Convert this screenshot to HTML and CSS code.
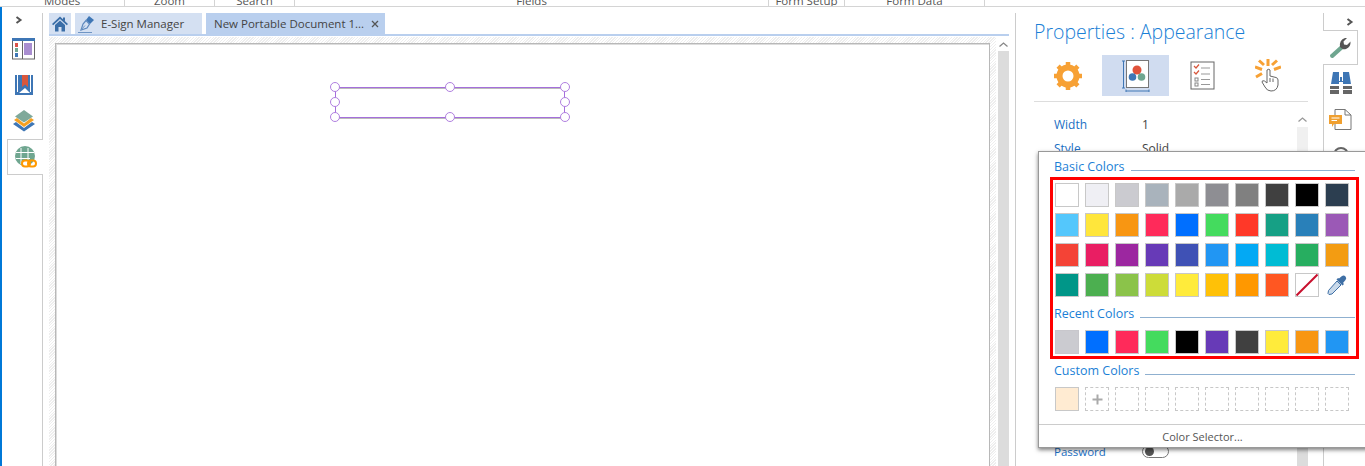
FILE: index.html
```html
<!DOCTYPE html>
<html>

<head>
  <meta charset="utf-8">
  <title>Form editor</title>
  <link rel="stylesheet" href="styles.css">
</head>

<body>

<div class="ribbon">
  <div class="group w125">Modes</div>
  <div class="group w90">Zoom</div>
  <div class="group w80">Search</div>
  <div class="group w474">Fields</div>
  <div class="group w76">Form Setup</div>
  <div class="group w140">Form Data</div>
</div>

<div class="main">

  <div class="rail">
    <div class="chevron"><svg width="8" height="8" viewBox="0 0 8 8"><path d="M1.500 1 L5.500 4 L1.500 7" fill="none" stroke="#555" stroke-width="2"/></svg></div>
    <div class="railitem">
      <svg width="24" height="22" viewBox="0 0 24 22">
        <rect x="0.500" y="1" width="22" height="20" fill="#fff" stroke="#666"/>
        <rect x="0" y="0" width="23" height="3" fill="#3e76b5"/>
        <rect x="10" y="3" width="1" height="18" fill="#666"/>
        <rect x="3" y="5" width="3" height="4" fill="#d9534a"/>
        <rect x="3" y="10" width="3" height="4" fill="#6fa690"/>
        <rect x="3" y="15" width="3" height="4" fill="#3e76b5"/>
        <rect x="12" y="5" width="8" height="12" fill="#a98ed0"/>
      </svg>
    </div>
    <div class="railitem">
      <svg width="20" height="22" viewBox="0 0 20 22">
        <rect x="1" y="1" width="18" height="20" fill="#3e76b5"/>
        <rect x="3" y="1" width="1" height="17" fill="#fff"/>
        <rect x="16" y="1" width="1" height="17" fill="#fff"/>
        <path d="M8 1 H14 V13 L11 10.500 L8 13 Z" fill="#d9573c"/>
        <path d="M5 19 L11 14 L16 19 Z" fill="#fff"/>
      </svg>
    </div>
    <div class="railitem">
      <svg width="22" height="22" viewBox="0 0 22 22">
        <path d="M0 14 L3 12 L11 18 L19 12 L22 14 L11 21.500 Z" fill="#3e76b5"/>
        <path d="M1 10 L4 8 L11 13.500 L18 8 L21 10 L11 17 Z" fill="#f5a021"/>
        <path d="M11 0 L20 6.500 L11 12.500 L2 6.500 Z" fill="#7fa99a"/>
      </svg>
    </div>
    <div class="railitem active">
      <svg width="22" height="22" viewBox="0 0 22 22">
        <circle cx="10" cy="10" r="10" fill="#6fa690"/>
        <path d="M6 2 V18 M13 2 V14 M1 6.500 H19 M1 12.500 H15" stroke="#fff" stroke-width="1" fill="none"/>
        <rect x="7" y="14.500" width="8" height="6" rx="3" fill="#fff" stroke="#f90" stroke-width="2"/>
        <rect x="13" y="14.500" width="8" height="6" rx="3" fill="none" stroke="#f90" stroke-width="2"/>
      </svg>
    </div>
  </div>

  <div class="workspace">
    <div class="tabs">
      <div class="tab home">
        <svg width="16" height="16" viewBox="0 0 16 16"><path d="M8 0.500 L16 8 L14.800 9.200 L8 3 L1.200 9.200 L0 8 Z M11 1.500 H13 V5 L11 3.500 Z M3 9 L8 4.500 L13 9 V15.500 H9.500 V11 H6.500 V15.500 H3 Z" fill="#3a6ea8"/></svg>
      </div>
      <div class="tab esign">
        <svg width="17" height="18" viewBox="0 0 17 18">
          <path d="M11 1 L16 5 L12 9 L8 5 Z" fill="#3e76b5"/>
          <path d="M8 5.500 L11.500 9 L9 13 L3 15 L5 9 Z" fill="none" stroke="#5d88bd" stroke-width="1.200"/>
          <path d="M3 15 L7 10.500 M0 17.500 H14" stroke="#6f95c4" stroke-width="1" fill="none"/>
        </svg>
        <span>E-Sign Manager</span>
      </div>
      <div class="tab doc">
        <span>New Portable Document 1...</span>
        <svg class="close" width="8" height="8" viewBox="0 0 8 8"><path d="M1 1 L7 7 M7 1 L1 7" stroke="#555" stroke-width="1.300"/></svg>
      </div>
    </div>
    <div class="canvas">
      <div class="hatch">
        <div class="page">
          <div class="field">
            <span class="handle h1"></span>
            <span class="handle h2"></span>
            <span class="handle h3"></span>
            <span class="handle h4"></span>
            <span class="handle h5"></span>
            <span class="handle h6"></span>
            <span class="handle h7"></span>
            <span class="handle h8"></span>
          </div>
        </div>
      </div>
      <div class="vscroll">
        <div class="arrow"><svg width="9" height="5" viewBox="0 0 9 5"><path d="M0.500 4.500 L4.500 1 L8.500 4.500" fill="none" stroke="#888" stroke-width="1.300"/></svg></div>
        <div class="track"></div>
      </div>
    </div>
  </div>

  <div class="panel">
    <div class="paneltitle">Properties : Appearance</div>
    <div class="paneltabs">
      <div class="ptab first">
        <svg width="28" height="28" viewBox="0 0 28 28">
          <circle cx="14" cy="14" r="8.500" fill="none" stroke="#f7a135" stroke-width="6"/>
          <path d="M14 0 V5 M14 23 V28 M0 14 H5 M23 14 H28 M4.100 4.100 L7.600 7.600 M20.400 20.400 L23.900 23.900 M23.900 4.100 L20.400 7.600 M7.600 20.400 L4.100 23.900" stroke="#f7a135" stroke-width="4.500"/>
        </svg>
      </div>
      <div class="ptab selected">
        <svg width="28" height="32" viewBox="0 0 28 32">
          <path d="M0 1 H3 M1.500 1 V28 M0 28 H3 M4 31 H27 M4 29.500 V32 M27 29.500 V32" stroke="#3e76b5" fill="none"/>
          <rect x="4.500" y="0.500" width="22" height="27" fill="#fff" stroke="#777"/>
          <circle cx="15" cy="10" r="4.500" fill="#e0523a"/>
          <circle cx="10.500" cy="17" r="3.800" fill="#3e76b5"/>
          <circle cx="19.500" cy="17" r="3.800" fill="#6fa690"/>
        </svg>
      </div>
      <div class="ptab">
        <svg width="25" height="29" viewBox="0 0 25 29">
          <rect x="1" y="1" width="23" height="27" fill="#fff" stroke="#666" stroke-width="1"/>
          <path d="M4 5 L6 7 L9 3.500 M4 11 L6 13 L9 9.500" fill="none" stroke="#d9573c" stroke-width="1.200"/>
          <path d="M11 7 H20 M11 13 H20 M11 18.500 H20 M11 23.500 H20" stroke="#999"/>
          <rect x="5" y="17" width="3" height="3" fill="none" stroke="#888"/>
          <rect x="5" y="22" width="3" height="3" fill="none" stroke="#888"/>
        </svg>
      </div>
      <div class="ptab">
        <svg width="26" height="33" viewBox="0 0 26 33">
          <path d="M13 0 V7 M0 8 L7 10.500 M26 8 L19 10.500 M4 1.500 L9 6 M22 1.500 L17 6 M1 18 L7 14.500" stroke="#f7a135" stroke-width="3" fill="none"/>
          <path d="M12 11 Q14 9.500 15 11 V17 L21 18.500 Q23 19 23 21 V26 Q22 32 16 32 Q12 32 10 28 L7 23 Q7 21 9.500 22 L12 24 Z" fill="#fff" stroke="#666"/>
          <path d="M15 19 V23 M18 19.500 V23" stroke="#666"/>
        </svg>
      </div>
    </div>
    <div class="props">
      <div class="proplist">
        <div class="prop"><span class="propname">Width</span><span>1</span></div>
        <div class="prop"><span class="propname">Style</span><span>Solid</span></div>
        <div class="prop password"><span class="propname">Password</span><span class="toggle"></span></div>
      </div>
      <div class="propscroll">
        <div class="arrow"><svg width="9" height="5" viewBox="0 0 9 5"><path d="M0.500 4.500 L4.500 1 L8.500 4.500" fill="none" stroke="#999" stroke-width="1.300"/></svg></div>
        <div class="proptrack"><div class="propthumb"></div></div>
      </div>
    </div>
  </div>

  <div class="rrail">
    <div class="chevron"><svg width="8" height="8" viewBox="0 0 8 8"><path d="M1.500 1 L5.500 4 L1.500 7" fill="none" stroke="#555" stroke-width="2"/></svg></div>
    <div class="rritem active">
      <svg width="22" height="22" viewBox="0 0 22 22">
        <path d="M1 18 L11 9 L14 12 L4 21 Q1 21.500 1 18 Z" fill="#6fa690"/>
        <path d="M11 10 Q10 3 16 1 L18 1 L14.500 4.500 L15 7.500 L18 8 L21.500 4.500 Q22 10 17 12 Q15 12.500 13.500 12 Z" fill="#555"/>
      </svg>
    </div>
    <div class="rritem">
      <svg width="22" height="22" viewBox="0 0 22 22">
        <path d="M3 0 H9 V9 H10 V5 H12 V9 H13 V0 H19 L21 12 H13 V10 H9 V12 H1 Z" fill="#3e76b5"/>
        <rect x="0" y="14" width="9" height="3" fill="#666"/><rect x="13" y="14" width="9" height="3" fill="#666"/>
        <rect x="0" y="18" width="9" height="4" fill="#666"/><rect x="13" y="18" width="9" height="4" fill="#666"/>
      </svg>
    </div>
    <div class="rritem">
      <svg width="23" height="21" viewBox="0 0 23 21">
        <path d="M6 0.500 H16 L22 6 V20.500 H6 Z" fill="#fff" stroke="#777"/>
        <path d="M16 0.500 V6 H22" fill="none" stroke="#777"/>
        <path d="M0 6 H13 V15 H5 L3 18 V15 H0 Z" fill="#f0a030"/>
        <path d="M2.500 9 H10.500 M2.500 11.500 H8" stroke="#fff"/>
      </svg>
    </div>
    <div class="rritem">
      <svg width="20" height="20" viewBox="0 0 20 20"><circle cx="10" cy="10" r="7" fill="none" stroke="#666" stroke-width="2"/></svg>
    </div>
  </div>
</div>

<div class="popup">
  <div class="heading outer"><span>Basic Colors</span><i></i></div>
  <div class="redbox">
    <div class="swatches">
      <b class="sw white"></b><b class="sw mist"></b><b class="sw silver"></b><b class="sw slate"></b><b class="sw gray1"></b><b class="sw gray2"></b><b class="sw gray3"></b><b class="sw coal"></b><b class="sw black"></b><b class="sw navy"></b>
      <b class="sw sky"></b><b class="sw lemon"></b><b class="sw amber"></b><b class="sw rose"></b><b class="sw azure"></b><b class="sw mint"></b><b class="sw scarlet"></b><b class="sw teal"></b><b class="sw steel"></b><b class="sw wisteria"></b>
      <b class="sw red"></b><b class="sw pink"></b><b class="sw purple"></b><b class="sw violet"></b><b class="sw indigo"></b><b class="sw blue"></b><b class="sw cyan1"></b><b class="sw cyan2"></b><b class="sw emerald"></b><b class="sw orange1"></b>
      <b class="sw mtteal"></b><b class="sw green"></b><b class="sw lime1"></b><b class="sw lime2"></b><b class="sw yellow"></b><b class="sw gold"></b><b class="sw orange2"></b><b class="sw deep"></b>
      <b class="sw none"><svg width="22" height="22" viewBox="0 0 22 22"><path d="M0.500 21.500 L21.500 0.500" stroke="#c8102e" stroke-width="2"/></svg></b>
      <b class="dropper"><svg width="20" height="20" viewBox="0 0 20 20">
        <path d="M12 3.500 L15 1 Q17 0 18.500 1.500 Q20 3 18.500 5 L16 8 L17 9 L15.500 10.500 L9.500 4.500 L11 3 Z" fill="#3e6fa5"/>
        <path d="M10 6 L14 10 L5 19 L2 19.500 L1 18.500 L1.500 15.500 Z" fill="#c9d9ea" stroke="#3e6fa5"/>
      </svg></b>
    </div>
    <div class="heading recent"><span>Recent Colors</span><i></i></div>
    <div class="swatches">
      <b class="sw silver flat"></b><b class="sw azure"></b><b class="sw rose"></b><b class="sw mint"></b><b class="sw black"></b><b class="sw violet"></b><b class="sw coal"></b><b class="sw yellow"></b><b class="sw amber"></b><b class="sw blue"></b>
    </div>
  </div>
  <div class="heading outer custom"><span>Custom Colors</span><i></i></div>
  <div class="swatches customrow">
    <b class="sw cream"></b>
    <b class="sw empty plus"><svg width="11" height="11" viewBox="0 0 11 11"><path d="M5.500 0.500 V10.500 M0.500 5.500 H10.500" stroke="#aaa" stroke-width="2"/></svg></b>
    <b class="sw empty"></b><b class="sw empty"></b><b class="sw empty"></b><b class="sw empty"></b><b class="sw empty"></b><b class="sw empty"></b><b class="sw empty"></b><b class="sw empty"></b>
  </div>
  <div class="popupfoot">Color Selector...</div>
</div>

</body>
</html>
```

FILE: styles.css
```css
html, body {
  height: 100%;
}
body {
  margin: 0;
  overflow: hidden;
  background-color: #fff;
  color: #444;
  font-family: "Open Sans", "Liberation Sans", sans-serif;
  font-size: 11.5px;
  display: flex;
  flex-direction: column;
}

/* cut off ribbon at the top */
.ribbon {
  height: 6px;
  flex: none;
  display: flex;
  overflow: hidden;
  border-bottom: 1px solid #d4d4d4;
  background-color: #fff;
}
.group {
  box-sizing: border-box;
  height: 6px;
  line-height: 1px;
  text-align: center;
  color: #555;
  border-right: 1px solid #d4d4d4;
}
.w125 { width: 125px; }
.w90 { width: 90px; }
.w80 { width: 80px; }
.w474 { width: 474px; }
.w76 { width: 76px; }
.w140 { width: 140px; }

.main {
  flex: 1;
  display: flex;
  min-height: 0;
}

/* left rail */
.rail {
  box-sizing: border-box;
  width: 43px;
  flex: none;
  margin-top: 6px;
  border-left: 2px solid #0078d7;
  border-right: 1px solid #ccc;
  display: flex;
  flex-direction: column;
  position: relative;
}
.rail::before {
  content: "";
  position: absolute;
  left: -2px;
  top: -6px;
  width: 2px;
  height: 6px;
  background-color: #0078d7;
}
.chevron {
  height: 18px;
  display: flex;
  align-items: center;
  justify-content: center;
  padding-left: 1px;
}
.rail .chevron {
  padding-right: 8px;
  height: 14px;
}
.railitem {
  height: 36px;
  margin-left: 5px;
  display: flex;
  align-items: center;
  justify-content: center;
  padding-right: 1px;
}
.rail .railitem:nth-child(2) {
  margin-top: 4px;
}
.railitem.active {
  box-sizing: border-box;
  height: 36px;
  margin-right: -1px;
  padding-right: 0;
  border: 1px solid #ccc;
  border-right: none;
  background-color: #fff;
}

/* document area */
.workspace {
  width: 966px;
  flex: none;
  margin-top: 6px;
  margin-left: 6px;
  display: flex;
  flex-direction: column;
  min-height: 0;
}
.tabs {
  height: 21px;
  flex: none;
  display: flex;
  gap: 4px;
  border-bottom: 2px solid #b9cfee;
  width: 960px;
}
.tab {
  display: flex;
  align-items: center;
  background-color: #d4e0f2;
  color: #444;
  white-space: nowrap;
}
.tab.home {
  width: 22px;
  justify-content: center;
}
.tab.esign {
  width: 127px;
  padding-left: 3px;
  box-sizing: border-box;
  gap: 6px;
}
.tab.doc {
  width: 179px;
  box-sizing: border-box;
  padding: 0 6px 0 8px;
  justify-content: space-between;
  background-color: #b9cfee;
}
.canvas {
  flex: 1;
  display: flex;
  min-height: 0;
  width: 960px;
  margin-top: 1px;
}
.hatch {
  width: 947px;
  box-sizing: border-box;
  padding: 6px 6px 0 6px;
  background-image: repeating-linear-gradient(135deg, #eee 0, #eee 1px, #fff 1px, #fff 2px);
}
.page {
  box-sizing: border-box;
  height: 100%;
  border: 1px solid #b8b8b8;
  border-bottom: none;
  box-shadow: inset 1px 1px 0 #ddd;
  background-color: #fff;
  position: relative;
}
.field {
  position: absolute;
  left: 279px;
  top: 43px;
  width: 230px;
  height: 31px;
  box-sizing: border-box;
  border: 1px solid #a56fdb;
  box-shadow: 0 1px 0 #bbb, inset 0 1px 0 #bbb;
}
.handle {
  position: absolute;
  box-sizing: border-box;
  width: 10px;
  height: 10px;
  border: 1.5px solid #b07fe0;
  border-radius: 50%;
  background-color: #fff;
}
.h1 { left: -6px; top: -6px; }
.h2 { left: 109px; top: -6px; }
.h3 { left: 224px; top: -6px; }
.h4 { left: -6px; top: 9px; }
.h5 { left: 224px; top: 9px; }
.h6 { left: -6px; top: 24px; }
.h7 { left: 109px; top: 24px; }
.h8 { left: 224px; top: 24px; }

.vscroll {
  width: 11px;
  margin-left: 2px;
  display: flex;
  flex-direction: column;
}
.arrow {
  height: 14px;
  display: flex;
  align-items: center;
  justify-content: center;
  flex: none;
}
.track {
  flex: 1;
  background-color: #dcdcdc;
}

/* properties panel */
.panel {
  box-sizing: border-box;
  width: 308px;
  flex: none;
  margin-top: 6px;
  border-left: 1px solid #ccc;
  padding: 0 15px 0 18px;
  display: flex;
  flex-direction: column;
  min-height: 0;
}
.paneltitle {
  font-size: 19.5px;
  font-weight: 300;
  line-height: 26px;
  margin-top: 6px;
  color: #1b7fd6;
  white-space: nowrap;
}
.paneltabs {
  display: flex;
  margin-top: 10px;
  height: 41px;
  flex: none;
  padding-bottom: 5px;
  border-bottom: 1px solid #ddd;
}
.ptab {
  width: 66px;
  display: flex;
  align-items: center;
  justify-content: center;
}
.ptab.first {
  width: 68px;
}
.ptab.selected {
  width: 67px;
  background-color: #d0dcf0;
}
.props {
  flex: 1;
  display: flex;
  min-height: 0;
  padding-top: 10px;
}
.proplist {
  flex: 1;
  display: flex;
  flex-direction: column;
  padding-left: 20px;
}
.prop {
  height: 24px;
  display: flex;
  align-items: center;
  color: #444;
  font-size: 12px;
}
.propname {
  width: 88px;
  color: #1b6fc4;
}
.prop.password {
  margin-top: auto;
  margin-bottom: 3px;
}
.password .propname {
  font-size: 11.5px;
}
.toggle {
  box-sizing: border-box;
  width: 27px;
  height: 13px;
  border: 1px solid #777;
  border-radius: 7px;
  position: relative;
}
.toggle::before {
  content: "";
  position: absolute;
  left: 2px;
  top: 1px;
  width: 9px;
  height: 9px;
  border-radius: 50%;
  background-color: #555;
}
.propscroll {
  width: 11px;
  flex: none;
  display: flex;
  flex-direction: column;
}
.propscroll .arrow {
  height: 15px;
}
.proptrack {
  flex: 1;
  background-color: #f0f0f0;
  display: flex;
  flex-direction: column;
  justify-content: flex-end;
}
.propthumb {
  height: 30px;
  background-color: #dcdcdc;
}

/* right rail */
.rrail {
  flex: 1;
  margin-top: 6px;
  display: flex;
  flex-direction: column;
  position: relative;
}
.rrail::before {
  content: "";
  position: absolute;
  left: 0;
  top: 0;
  bottom: 0;
  width: 1px;
  background-color: #ccc;
}
.rrail .chevron {
  width: 35px;
  height: 17px;
  justify-content: flex-end;
  padding-right: 4px;
  box-sizing: border-box;
}
.rritem {
  box-sizing: border-box;
  width: 35px;
  height: 36px;
  display: flex;
  align-items: center;
  justify-content: center;
  position: relative;
}
.rritem.active {
  height: 35px;
  border: 1px solid #ccc;
  border-left: none;
  background-color: #fff;
}

/* colour popup */
.popup {
  position: absolute;
  left: 1038px;
  top: 151px;
  width: 340px;
  height: 297px;
  box-sizing: border-box;
  padding: 6px 0 0 11px;
  border: 1px solid #999;
  background-color: #fff;
  box-shadow: 0 2px 4px rgba(0, 0, 0, 0.5);
}
.heading {
  height: 16px;
  display: flex;
  align-items: center;
  gap: 6px;
  color: #1b7fd6;
  font-size: 12.5px;
  white-space: nowrap;
}
.heading i {
  flex: 1;
  margin-top: 9px;
  border-bottom: 1px solid #8fb0d0;
}
.heading.outer {
  width: 301px;
  padding-left: 4px;
  margin-bottom: 3px;
}
.redbox {
  box-sizing: border-box;
  width: 309px;
  height: 182px;
  padding: 3px 0 0 2px;
  border: 3px solid #f00;
}
.heading.recent {
  width: 301px;
  margin: 8px 0 9px -1px;
}
.swatches {
  display: grid;
  grid-template-columns: repeat(10, 24px);
  grid-auto-rows: 24px;
  gap: 6px;
}
.heading.custom {
  margin-top: 3px;
  margin-bottom: 9px;
}
.customrow {
  padding-left: 5px;
}
.popupfoot {
  box-sizing: border-box;
  margin: 13px 0 0 -11px;
  height: 23px;
  width: 327px;
  border-top: 1px solid #ccc;
  text-align: center;
  line-height: 23px;
  font-size: 11px;
  color: #555;
}
.sw {
  display: block;
  box-sizing: border-box;
  border: 1px solid #c8c8c8;
}
.dropper {
  display: flex;
  align-items: center;
  justify-content: center;
}
.sw.flat { border-color: #c8c7cc; }
.sw.empty {
  border: 1px dashed #c8c8c8;
}
.sw.plus {
  display: flex;
  align-items: center;
  justify-content: center;
}
.none svg { display: block; }

.white { background-color: #fff; }
.mist { background-color: #efeff4; }
.silver { background-color: #cbcbd0; }
.slate { background-color: #a9b3bc; }
.gray1 { background-color: #aaa; }
.gray2 { background-color: #8e8e93; }
.gray3 { background-color: #808080; }
.coal { background-color: #404040; }
.black { background-color: #000; }
.navy { background-color: #2c3e50; }
.sky { background-color: #54c7fc; }
.lemon { background-color: #ffe63b; }
.amber { background-color: #f89612; }
.rose { background-color: #ff2a5a; }
.azure { background-color: #006fff; }
.mint { background-color: #44db5e; }
.scarlet { background-color: #ff3828; }
.teal { background-color: #16a085; }
.steel { background-color: #2980b9; }
.wisteria { background-color: #9b59b6; }
.red { background-color: #f44336; }
.pink { background-color: #e91e63; }
.purple { background-color: #9c27a0; }
.violet { background-color: #673ab7; }
.indigo { background-color: #3f51b5; }
.blue { background-color: #2196f3; }
.cyan1 { background-color: #03a9f4; }
.cyan2 { background-color: #00bcd4; }
.emerald { background-color: #27ae60; }
.orange1 { background-color: #f39c12; }
.mtteal { background-color: #009688; }
.green { background-color: #4caf50; }
.lime1 { background-color: #8bc34a; }
.lime2 { background-color: #cddc39; }
.yellow { background-color: #ffeb3b; }
.gold { background-color: #ffc107; }
.orange2 { background-color: #ff9800; }
.deep { background-color: #ff5722; }
.none { background-color: #fff; }
.cream { background-color: #ffebd2; }
```
